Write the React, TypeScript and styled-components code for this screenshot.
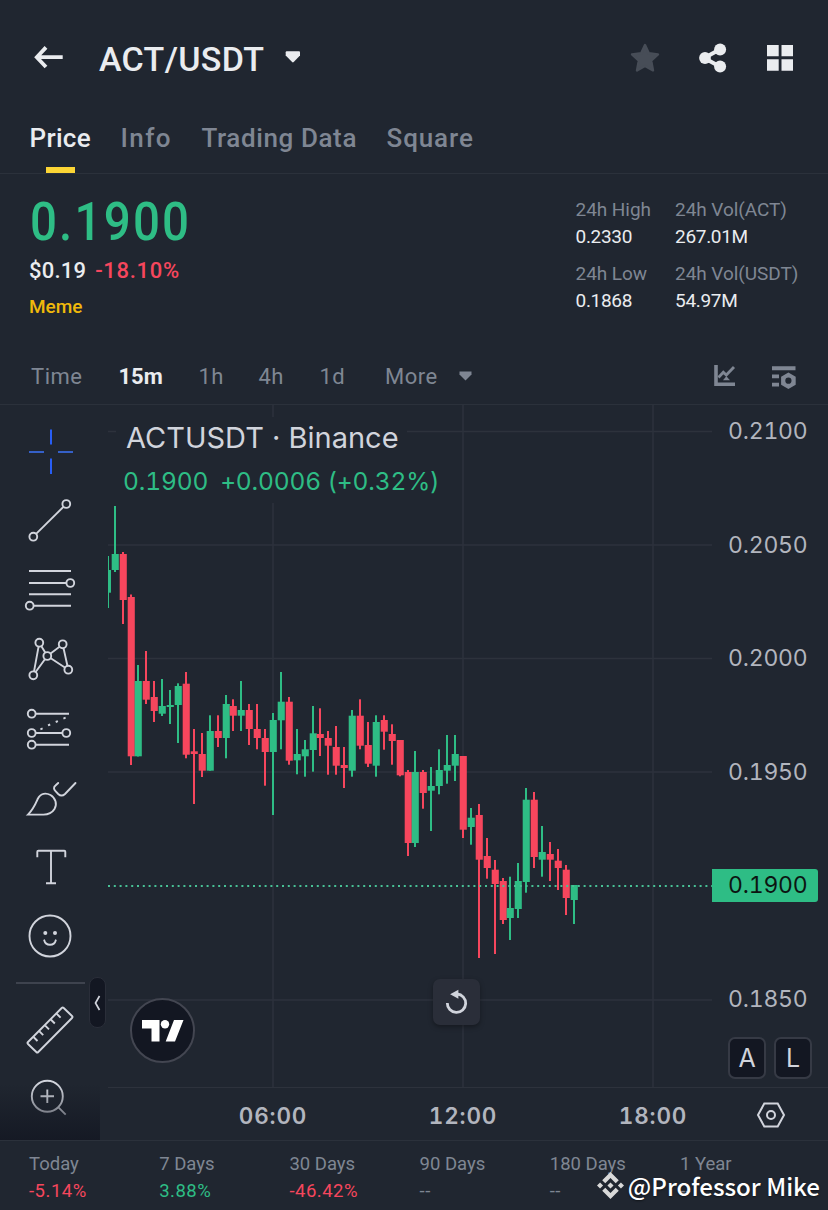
import React from "react";
import styled, { createGlobalStyle } from "styled-components";
import { SiBinance } from "react-icons/si";

const c = {
  bg: "#202630",
  line: "#2b313b",
  grid: "#2d323c",
  text: "#eaecef",
  muted: "#7f8693",
  green: "#2ebd85",
  red: "#f6465d",
  yellow: "#fcd535",
  gold: "#f0b90b",
  ink: "#131722",
  tool: "#d1d4dc",
  axis: "#b2b5be",
};

const GlobalStyle = createGlobalStyle`
  *, *::before, *::after { box-sizing: border-box; }
  body { margin: 0; background: ${c.bg}; }
`;

const Screen = styled.main`
  position: relative;
  width: 828px;
  height: 1210px;
  overflow: hidden;
  background: ${c.bg};
  color: ${c.text};
  font-family: Roboto, "Liberation Sans", sans-serif;
  white-space: nowrap;
`;

const Header = styled.header`
  display: flex;
  align-items: center;
  height: 116px;
  padding: 0 34px 0 33px;
`;

const Pair = styled.h1`
  margin: 0 21px 0 35px;
  padding-top: 1px;
  font-size: 34px;
  font-weight: 500;
  line-height: 44px;
  letter-spacing: 0.3px;
`;

const Actions = styled.div`
  display: flex;
  align-items: center;
  gap: 38.5px;
  margin-left: auto;
`;

const Tabs = styled.nav`
  display: grid;
  grid-template-columns: 91px 81px 185px auto;
  height: 58px;
  padding-left: 30px;
  border-bottom: 1px solid ${c.line};
`;

const Tab = styled.div<{ $active?: boolean; $track?: number }>`
  display: flex;
  flex-direction: column;
  align-items: flex-start;
  margin-left: -0.5px;
  font-size: 26px;
  font-weight: 500;
  line-height: 44px;
  letter-spacing: ${(p) => p.$track ?? 0.8}px;
  color: ${(p) => (p.$active ? c.text : c.muted)};
`;

const TabMark = styled.span`
  width: 29px;
  height: 6px;
  margin: 7px 0 0 16px;
  background: ${c.yellow};
`;

const Summary = styled.section`
  display: flex;
  justify-content: space-between;
  height: 175px;
  padding: 18px 29px 0 29px;
`;

const BigPrice = styled.div`
  padding-left: 1px;
  font-size: 54px;
  font-weight: 500;
  line-height: 60px;
  letter-spacing: 2.5px;
  color: ${c.green};
  transform: scaleX(0.88);
  transform-origin: left center;
`;

const SubPrice = styled.div`
  display: flex;
  gap: 9px;
  padding-top: 1px;
  font-size: 22px;
  font-weight: 500;
  line-height: 36px;
  letter-spacing: 0.2px;
`;

const Change = styled.span`
  color: ${c.red};
  letter-spacing: 0.7px;
`;

const Tag = styled.div`
  font-size: 19px;
  font-weight: 500;
  line-height: 36px;
  color: ${c.gold};
`;

const Stats = styled.dl`
  display: grid;
  grid-template-columns: 99.5px 124px;
  row-gap: 9px;
  align-content: start;
  margin: 4px 0 0;
  font-size: 19px;
  line-height: 27.3px;
`;

const StatLabel = styled.dt`
  color: ${c.muted};
  letter-spacing: -0.05px;
`;

const StatValue = styled.dd`
  margin: 0;
  letter-spacing: -0.3px;
`;

const Periods = styled.nav`
  display: flex;
  align-items: center;
  height: 56px;
  padding: 0 32px 0 31px;
  border-bottom: 1px solid ${c.line};
`;

const Period = styled.span<{ $w: number; $active?: boolean }>`
  width: ${(p) => p.$w}px;
  font-size: 22px;
  letter-spacing: ${(p) => (p.$active ? 0 : 0.5)}px;
  font-weight: ${(p) => (p.$active ? 700 : 400)};
  color: ${(p) => (p.$active ? c.text : c.muted)};
`;

const PeriodIcons = styled.div`
  display: flex;
  gap: 36px;
  margin-left: auto;
`;

const Chart = styled.section`
  display: flex;
  height: 735px;
  font-family: Inter, "Liberation Sans", sans-serif;
`;

const Rail = styled.aside`
  position: relative;
  display: flex;
  flex-direction: column;
  align-items: center;
  width: 100px;
  padding-top: 12px;
`;

const RailFade = styled.div`
  position: absolute;
  left: 0;
  right: 0;
  bottom: 0;
  height: 56px;
  background: linear-gradient(to bottom, rgba(19, 23, 34, 0), rgba(19, 23, 34, 0.85));
`;

const RailTab = styled.div`
  position: absolute;
  left: 89px;
  top: 572px;
  display: flex;
  align-items: center;
  justify-content: center;
  width: 17px;
  height: 51px;
  border: 1px solid #2a2e39;
  border-radius: 8px;
  background: ${c.ink};
`;

const Tool = styled.div<{ $h: number }>`
  display: flex;
  flex-shrink: 0;
  align-items: center;
  height: ${(p) => p.$h}px;
`;

const ToolSvg = styled.svg`
  display: block;
  width: 56px;
  height: 56px;
  fill: none;
  stroke: ${c.tool};
  stroke-width: 1.9;
`;

const RailDivider = styled.hr`
  flex-shrink: 0;
  width: 69px;
  height: 2px;
  margin: 11.8px 0 10px;
  border: 0;
  background: #3e434e;
`;

const Main = styled.div`
  flex: 1;
  display: flex;
  flex-direction: column;
  padding-left: 8px;
`;

const PlotRow = styled.div`
  display: flex;
  height: 683px;
  border-bottom: 1px solid ${c.grid};
`;

const Plot = styled.div`
  position: relative;
  width: 604px;
`;

const PlotSvg = styled.svg`
  display: block;
`;

const Legend = styled.div`
  position: absolute;
  left: 8px;
  top: 12px;
  display: flex;
  flex-direction: column;
  align-items: flex-start;
`;

const LegendTitle = styled.div`
  padding: 0 8px 0 10px;
  background: ${c.bg};
  font-size: 29px;
  line-height: 42px;
  letter-spacing: 0;
  color: ${c.tool};
`;

const LegendPrice = styled.div`
  display: flex;
  gap: 12px;
  padding: 0 7px;
  background: ${c.bg};
  font-size: 24.5px;
  line-height: 44px;
  letter-spacing: -0.15px;
  font-variant-numeric: tabular-nums;
  color: ${c.green};
`;

const Logo = styled.div`
  position: absolute;
  left: 22px;
  top: 593px;
  display: flex;
  align-items: center;
  justify-content: center;
  width: 65px;
  height: 65px;
  padding-top: 1px;
  border: 2px solid #434651;
  border-radius: 50%;
  background: ${c.ink};
`;

const Reset = styled.button`
  position: absolute;
  left: 325px;
  top: 574px;
  display: flex;
  align-items: center;
  justify-content: center;
  width: 47px;
  height: 46px;
  padding: 0;
  border: 0;
  border-radius: 7px;
  background: #2a2e39;
  box-shadow: 0 2px 5px rgba(0, 0, 0, 0.35);
`;

const PriceAxis = styled.div`
  display: flex;
  flex-direction: column;
  align-items: flex-start;
  width: 116px;
  padding-top: 10px;
`;

const PriceLabel = styled.span<{ $current?: boolean }>`
  width: 106px;
  height: 33px;
  margin-bottom: 80.6px;
  padding-left: 16px;
  border-radius: 0 3px 3px 0;
  background: ${(p) => (p.$current ? c.green : "transparent")};
  color: ${(p) => (p.$current ? "#0c1512" : c.axis)};
  font-size: 23px;
  line-height: 33.500px;
  letter-spacing: -0.2px;
  font-variant-numeric: tabular-nums;

  &:last-of-type {
    margin-bottom: 21px;
  }
`;

const ScaleRow = styled.div`
  display: flex;
  gap: 8px;
  margin-left: 16px;
`;

const ScaleButton = styled.div`
  width: 38px;
  height: 42px;
  border: 2px solid #363a45;
  border-radius: 7px;
  background: ${c.ink};
  color: ${c.tool};
  font-size: 25px;
  line-height: 39px;
  text-align: center;
`;

const TimeAxis = styled.div`
  display: grid;
  grid-template-columns: 70px 190px 190px 190px 38px;
  align-items: center;
  flex: 1;
  padding-top: 2px;

  & > svg {
    justify-self: end;
    margin-bottom: 1px;
  }
`;

const TimeLabel = styled.span`
  font-size: 22.5px;
  font-weight: 600;
  letter-spacing: 0.8px;
  font-variant-numeric: tabular-nums;
  text-align: center;
  color: ${c.axis};
`;

const Returns = styled.footer`
  display: grid;
  grid-template-columns: repeat(6, 130.2px);
  height: 70px;
  padding: 10px 0 0 29px;
  border-top: 1px solid ${c.line};
  font-size: 18.5px;
  line-height: 27px;
`;

const ReturnCell = styled.div`
  display: flex;
  flex-direction: column;
`;

const ReturnLabel = styled.span`
  color: ${c.muted};
`;

const ReturnValue = styled.span<{ $tone: string }>`
  color: ${(p) => p.$tone};
  letter-spacing: 0.5px;
`;

const Watermark = styled.div`
  position: absolute;
  right: 8px;
  top: 1168px;
  display: flex;
  align-items: center;
  gap: 4px;
  color: #fff;
  font-family: "Noto Sans CJK SC", "Noto Sans", sans-serif;
  font-size: 24.1px;
  font-weight: 500;
  line-height: 35px;
  text-shadow: 0 1px 2px rgba(0, 0, 0, 0.5);
`;

/* [direction, high, low, body top, body bottom] in chart pixels */
type Candle = ["u" | "d", number, number, number, number];

const candles: Candle[] = [
  ["u", 506, 572, 554, 570], ["d", 552, 624, 554, 600], ["d", 594.5, 765, 597, 756.3],
  ["u", 665, 756.5, 681, 756.3], ["d", 651, 704, 681, 699.7], ["d", 681, 722, 697, 711],
  ["u", 679, 716, 706, 713.7], ["u", 690, 724, 705, 707], ["u", 683.3, 743, 686, 705],
  ["d", 672, 758.3, 683.7, 754.7], ["d", 729, 804, 751.3, 754], ["d", 733, 777, 754, 770.7],
  ["u", 715.3, 770.7, 731, 770.7], ["d", 715.3, 747, 731, 738], ["u", 695, 758.3, 704, 738],
  ["d", 699.3, 731, 706, 715.7], ["u", 681, 731, 710, 715.7], ["d", 704, 745, 710, 729],
  ["d", 704, 749.3, 729, 738], ["d", 729, 785.7, 738, 752], ["u", 713, 815, 720, 752],
  ["u", 672, 749.3, 701.7, 720.3], ["d", 697, 764.7, 701.7, 760.7], ["u", 729, 774.3, 754, 760.3],
  ["u", 740, 776.7, 749.3, 756.3], ["u", 706, 771.7, 733.3, 750], ["d", 708.3, 756, 734, 738],
  ["d", 731, 774.7, 738, 745.7], ["d", 726, 774.7, 747, 765.7], ["d", 747, 788, 765, 768],
  ["u", 710, 776.7, 715.7, 770.7], ["d", 699.3, 749.3, 715.7, 745.7], ["d", 722, 767, 745, 763.7],
  ["u", 715.3, 776.7, 722, 765.7], ["d", 715.3, 749.7, 720, 731.7], ["d", 724.3, 764.7, 734, 741],
  ["d", 740, 776.3, 740, 775.3], ["d", 770, 856, 772, 843], ["u", 751, 847, 772, 843],
  ["d", 770, 808.7, 772, 793], ["u", 767, 831, 786, 790.7], ["u", 749.3, 794.3, 770, 786],
  ["u", 735, 783.7, 765, 770.7], ["u", 735, 781, 754, 765.7], ["d", 756, 838, 756, 829.7],
  ["u", 808, 844.7, 817.7, 827], ["d", 804, 958, 815, 859.7], ["d", 838, 878.7, 856, 868],
  ["d", 860, 954, 869.7, 884], ["d", 878, 924, 881, 920], ["u", 876.7, 940, 908, 918],
  ["u", 863, 918, 881, 909], ["u", 788, 892.7, 799.7, 882], ["d", 792, 868, 799.7, 857],
  ["u", 826, 876.7, 852, 859.7], ["d", 842, 881, 854, 859.7], ["d", 849, 890, 860.7, 868],
  ["d", 865, 915, 869.7, 898], ["u", 885, 924, 885, 900],
];

const CandleChart = () => (
  <PlotSvg width="604" height="682" viewBox="108 405 604 682">
    <g stroke={c.grid} strokeWidth="1.5">
      {[431.5, 545, 658.5, 772, 1000].map((y) => (
        <line key={y} x1="108" x2="712" y1={y} y2={y} />
      ))}
      {[273, 463, 653].map((x) => (
        <line key={x} x1={x} x2={x} y1="405" y2="1087" />
      ))}
    </g>
    <rect x="108" y="556" width="1" height="52" fill={c.green} />
    <rect x="108" y="570" width="3" height="22.7" fill={c.green} />
    {candles.map(([dir, high, low, top, bottom], i) => {
      const x = Math.round(273 + (i - 20) * 7.914);
      const fill = dir === "u" ? c.green : c.red;
      return (
        <g key={i} fill={fill}>
          <rect x={x - 1} y={high} width="2" height={low - high} />
          <rect x={x - 3.3} y={top} width="7.1" height={bottom - top} />
        </g>
      );
    })}
    <line x1="108" x2="712" y1="886" y2="886" stroke="#48c095" strokeWidth="2" strokeDasharray="2 3.8" />
  </PlotSvg>
);

const Knob = ({ x, y }: { x: number; y: number }) => (
  <circle cx={x} cy={y} r="3.9" fill={c.bg} />
);

const ToolIcon = ({ h = 69.2, children }: { h?: number; children: React.ReactNode }) => (
  <Tool $h={h}>
    <ToolSvg viewBox="-28 -28 56 56">{children}</ToolSvg>
  </Tool>
);

const Toolbar = () => (
  <Rail>
    <ToolIcon>
      <path d="M1-22.5V-7.5M1 6.5V22" stroke="#2962ff" />
      <path d="M-21 0H-6M8 0H23" stroke="#3560c8" />
    </ToolIcon>
    <ToolIcon>
      <path d="M-16.7 15.7L16.3-17" />
      <Knob x={-16.7} y={15.7} />
      <Knob x={16.3} y={-17} />
    </ToolIcon>
    <ToolIcon>
      <path d="M-21-19H21M-21-7H18M-21 4.3H21M-18 15.7H21" />
      <Knob x={20.3} y={-7} />
      <Knob x={-20.3} y={15.7} />
    </ToolIcon>
    <ToolIcon>
      <path d="M-10.7-16.3L-16.7 16.3L-2.7-3L-10.7-16.3M-2.7-3L12.7-14.7L18.3 10.7Z" />
      <Knob x={-10.7} y={-16.3} />
      <Knob x={12.7} y={-14.7} />
      <Knob x={-2.7} y={-3} />
      <Knob x={-16.7} y={16.3} />
      <Knob x={18.3} y={10.7} />
    </ToolIcon>
    <ToolIcon>
      <g transform="translate(0 1)">
        <path d="M-18.3-15.3H19M-18.3 4H16.3M-18.3 15.7H19" />
        <path d="M-9.6 .3l2.2-.9M-2-3.6l2.2-.9M5.7-7l2.2-.9M13.4-10.4l2.2-.9" />
        <Knob x={-18.3} y={-15.3} />
        <Knob x={-18.3} y={4} />
        <Knob x={16.3} y={4} />
        <Knob x={-18.3} y={15.7} />
      </g>
    </ToolIcon>
    <ToolIcon>
      <g transform="translate(-.5 1)">
        <path d="M-21.5 15.6C-16 10-14 5-11.8 0C-9-6-3.5-6.4 1-4C6-1 8 5 5 10C2.5 14-1.5 15.6-6 15.6Z" />
        <path d="M26-16L15.5-5Q12-1.8 8.7-5L6-7.8Q3-11 6-13.5L8.7-16" strokeLinecap="round" />
      </g>
    </ToolIcon>
    <ToolIcon>
      <path d="M-12.7-9.7V-15.3Q-12.7-16.3-11.7-16.3H14.3Q15.3-16.3 15.3-15.3V-9.7M1-16.3V16.3M-4 16.3H6" />
    </ToolIcon>
    <ToolIcon>
      <circle cx="0" cy="0" r="20.5" />
      <circle cx="-4.7" cy="-3" r="2" fill={c.tool} stroke="none" />
      <circle cx="5" cy="-3" r="2" fill={c.tool} stroke="none" />
      <path d="M-5.8 4.3C-4.3 10.3 4.3 10.3 5.8 4.3" strokeLinecap="round" />
    </ToolIcon>
    <RailDivider />
    <ToolIcon>
      <g strokeLinejoin="round">
        <path d="M11.7-21Q12.7-22 13.7-21L22-13Q23-12 22-11L-11.7 23Q-12.7 24-13.7 23L-22 15Q-23 14-22 13Z" />
        <path d="M-16.5 8l4 4M-10.8 2.2l4 4M-5-3.6l4 4M.8-9.5l4 4M6.6-15.3l4 4" />
      </g>
    </ToolIcon>
    <ToolIcon h={69}>
      <circle cx="-2.7" cy="-1.7" r="15.5" />
      <path d="M-9.5-1.7H4M-2.7-8.5V5M8.7 9.7L15.7 16.7" />
    </ToolIcon>
    <RailFade />
    <RailTab>
      <svg width="8" height="16" viewBox="0 0 8 16" fill="none" stroke={c.tool} strokeWidth="1.7">
        <path d="M5.5 1L1.5 8L5.5 15" />
      </svg>
    </RailTab>
  </Rail>
);

const prices = ["0.2100", "0.2050", "0.2000", "0.1950", "0.1900", "0.1850"];

const returns: [string, string, string][] = [
  ["Today", "-5.14%", c.red],
  ["7 Days", "3.88%", c.green],
  ["30 Days", "-46.42%", c.red],
  ["90 Days", "--", c.muted],
  ["180 Days", "--", c.muted],
  ["1 Year", "--", c.muted],
];

export default function App() {
  return (
    <>
      <GlobalStyle />
      <Screen>
        <Header>
          <svg width="31" height="24" viewBox="0 0 31 24" fill="none" stroke={c.text} strokeWidth="3.8">
            <path d="M29.7 11.2H4M13 1.4L3.8 11.2L13 21" />
          </svg>
          <Pair>ACT/USDT</Pair>
          <svg width="16" height="14" viewBox="0 0 16 14" fill={c.text}>
            <path d="M.7 1.3Q.7 .3 1.7 .3H14Q15 .3 15 1.3V4.5L8.7 11Q7.9 11.8 7.1 11L.7 4.5Z" />
          </svg>
          <Actions>
            <svg width="30" height="30" viewBox="0 0 30 30">
              <path
                d="M15 2L18.8 10.3L28 11.4L21.2 17.7L23 27.4L15 23L7 27.4L8.8 17.7L2 11.4L11.2 10.3Z"
                fill="#474d57"
                stroke="#474d57"
                strokeWidth="2.4"
                strokeLinejoin="round"
              />
            </svg>
            <svg width="29" height="30" viewBox="1.3 0 29 30" fill={c.text} stroke={c.text}>
              <path d="M22 6.5L6.5 15L22 23.5" fill="none" strokeWidth="4" />
              <g stroke="none">
                <circle cx="7.3" cy="15" r="5.9" />
                <circle cx="22.4" cy="6.500" r="6" />
                <circle cx="22.4" cy="23.500" r="6" />
              </g>
            </svg>
            <svg width="28" height="28" viewBox="0 0 28 28" fill={c.text}>
              <path d="M1 1h11.7v11.2H1zM15.5 1h11.5v11.2H15.5zM1 15.3h11.7v11.5H1zM15.5 15.3h11.5v11.5H15.5z" />
            </svg>
          </Actions>
        </Header>

        <Tabs>
          <Tab $active $track={0.3}>
            Price
            <TabMark />
          </Tab>
          <Tab $track={1.4}>Info</Tab>
          <Tab $track={0.6}>Trading Data</Tab>
          <Tab $track={0.9}>Square</Tab>
        </Tabs>

        <Summary>
          <div>
            <BigPrice>0.1900</BigPrice>
            <SubPrice>
              <span>$0.19</span>
              <Change>-18.10%</Change>
            </SubPrice>
            <Tag>Meme</Tag>
          </div>
          <Stats>
            <div>
              <StatLabel>24h High</StatLabel>
              <StatValue>0.2330</StatValue>
            </div>
            <div>
              <StatLabel>24h Vol(ACT)</StatLabel>
              <StatValue>267.01M</StatValue>
            </div>
            <div>
              <StatLabel>24h Low</StatLabel>
              <StatValue>0.1868</StatValue>
            </div>
            <div>
              <StatLabel>24h Vol(USDT)</StatLabel>
              <StatValue>54.97M</StatValue>
            </div>
          </Stats>
        </Summary>

        <Periods>
          <Period $w={87.5}>Time</Period>
          <Period $w={80} $active>15m</Period>
          <Period $w={60}>1h</Period>
          <Period $w={61}>4h</Period>
          <Period $w={65.5}>1d</Period>
          <Period $w={73.5}>More</Period>
          <svg width="13" height="11" viewBox="0 0 13 11" fill={c.muted}>
            <path d="M.5 .5H12.5V3.5L6.5 9.5L.5 3.5Z" />
          </svg>
          <PeriodIcons>
            <svg width="22" height="22" viewBox="0 0 22 22" fill="none" stroke={c.muted}>
              <path d="M2 0V19.3H21" strokeWidth="3.6" />
              <path d="M4.5 12.5L9.3 7.2L12.3 10L20 2" strokeWidth="2.8" />
              <path d="M9 15.2L12.3 11.2L16 15.2Z" fill={c.muted} stroke="none" />
            </svg>
            <svg width="24" height="24" viewBox="0 0 24 24" fill={c.muted}>
              <path d="M0 1.3H23.5V5.3H0ZM0 9.5H7V13.3H0ZM0 17.8H7V21.6H0Z" />
              <path
                fillRule="evenodd"
                d="M16.4 7.5L23.7 11.7V19.7L16.4 24L9.1 19.7V11.7ZM16.4 12.6A3.1 3.1 0 1 0 16.4 18.8A3.1 3.1 0 1 0 16.4 12.6Z"
              />
            </svg>
          </PeriodIcons>
        </Periods>

        <Chart>
          <Toolbar />
          <Main>
            <PlotRow>
              <Plot>
                <CandleChart />
                <Legend>
                  <LegendTitle>ACTUSDT · Binance</LegendTitle>
                  <LegendPrice>
                    <span>0.1900</span>
                    <span>+0.0006 (+0.32%)</span>
                  </LegendPrice>
                </Legend>
                <Logo>
                  <svg width="42" height="22" viewBox="0 0 42 22" fill="#fff">
                    <path d="M0 0H17.5V21.5H9.5V8.5H0ZM32 0H41.5L33 21.5H23.7Z" />
                    <circle cx="23" cy="4.2" r="4.2" />
                  </svg>
                </Logo>
                <Reset>
                  <svg width="24" height="26" viewBox="0 0 24 26">
                    <path d="M2.3 14A9.2 9.2 0 1 0 12.1 5" fill="none" stroke={c.tool} strokeWidth="2.8" />
                    <path d="M5.1 5.3L13.4 .8V9.8Z" fill={c.tool} />
                  </svg>
                </Reset>
              </Plot>
              <PriceAxis>
                {prices.map((p) => (
                  <PriceLabel key={p} $current={p === "0.1900"}>
                    {p}
                  </PriceLabel>
                ))}
                <ScaleRow>
                  <ScaleButton>A</ScaleButton>
                  <ScaleButton>L</ScaleButton>
                </ScaleRow>
              </PriceAxis>
            </PlotRow>
            <TimeAxis>
              <span />
              <TimeLabel>06:00</TimeLabel>
              <TimeLabel>12:00</TimeLabel>
              <TimeLabel>18:00</TimeLabel>
              <svg width="30" height="28" viewBox="-15 -14 30 28" fill="none" stroke={c.tool} strokeWidth="2">
                <path d="M-13 0L-6.7-11.5H6.7L13 0L6.7 11.5H-6.7Z" />
                <circle r="4" />
              </svg>
            </TimeAxis>
          </Main>
        </Chart>

        <Returns>
          {returns.map(([label, value, tone]) => (
            <ReturnCell key={label}>
              <ReturnLabel>{label}</ReturnLabel>
              <ReturnValue $tone={tone}>{value}</ReturnValue>
            </ReturnCell>
          ))}
        </Returns>

        <Watermark>
          <SiBinance size={27} color="#d9d9d9" />
          @Professor Mike
        </Watermark>
      </Screen>
    </>
  );
}
